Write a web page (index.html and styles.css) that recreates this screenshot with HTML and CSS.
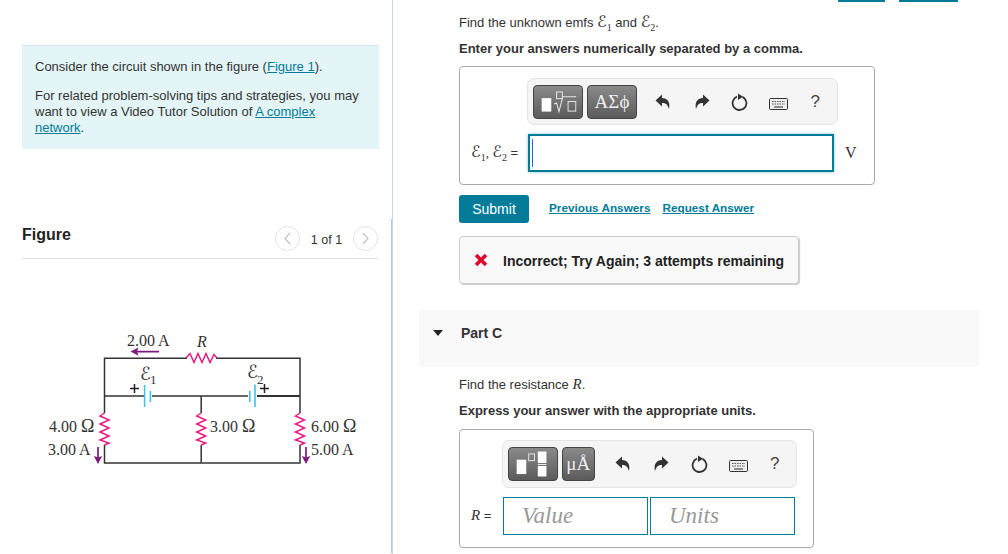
FILE: index.html
```html
<!DOCTYPE html>
<html lang="en">
<head>
  <meta charset="utf-8">
  <title>Part C</title>
  <link rel="stylesheet" href="styles.css">
</head>
<body>
<div class="page">
  <div class="left">
    <div class="info">
      <p>Consider the circuit shown in the figure (<a href="#">Figure 1</a>).</p>
      <p>For related problem-solving tips and strategies, you may want to view a Video Tutor Solution of <a href="#">A complex </a><a href="#">network</a>.</p>
    </div>
    <div class="figure-head">
      <h2>Figure</h2>
      <div class="pager">
        <span class="pager-btn"><svg width="9" height="13" viewBox="0 0 9 13"><path d="M7 1 L2 6.5 L7 12" fill="none" stroke="#c4c4c4" stroke-width="1.3"/></svg></span>
        <span class="pager-text">1 of 1</span>
        <span class="pager-btn"><svg width="9" height="13" viewBox="0 0 9 13"><path d="M2 1 L7 6.5 L2 12" fill="none" stroke="#c4c4c4" stroke-width="1.3"/></svg></span>
      </div>
    </div>
    <svg class="circuit" width="356" height="150" viewBox="22 320 356 150">
      <g fill="none" stroke="#333" stroke-width="1.5">
        <path d="M187 358.3 H104.5 V413 M104.5 445 V463 H300 V445 M300 413 V358.3 H216"/>
        <path d="M104.5 396 H144 M152 396 H248 M201.2 396 V413 M201.2 445 V463"/>
        <path d="M257 396 H300" stroke-width="2"/>
      </g>
      <g fill="none" stroke="#e8197f" stroke-width="1.5">
        <path d="M186 358 L190 353.5 L194 362.5 L198 353.5 L202 362.5 L206 353.5 L210 362.5 L214 354.5 L217 358"/>
        <path d="M104.5 413 L100 416 L109 420 L100 424 L109 428 L100 432 L109 436 L100 440 L109 443 L104.5 445"/>
        <path d="M201.2 413 L196.7 416 L205.7 420 L196.7 424 L205.7 428 L196.7 432 L205.7 436 L196.7 440 L205.7 443 L201.2 445"/>
        <path d="M300 413 L295.5 416 L304.5 420 L295.5 424 L304.5 428 L295.5 432 L304.5 436 L295.5 440 L304.5 443 L300 445"/>
      </g>
      <g stroke="#3cc4ea" stroke-width="1.6">
        <path d="M144.6 385 V407 M150.4 391 V402 M249.8 391 V402 M255 384.5 V407"/>
      </g>
      <g fill="none" stroke="#7d1a7d" stroke-width="1.7">
        <path d="M159 351.6 H134 M98 447 V459 M306 447 V459"/>
      </g>
      <g fill="#7d1a7d">
        <path d="M130.5 351.6 L138.5 347.5 L137 351.6 L138.5 355.7 Z"/>
        <path d="M98 464 L93.8 456 L98 457.5 L102.2 456 Z"/>
        <path d="M306 464 L301.8 456 L306 457.5 L310.2 456 Z"/>
      </g>
      <g class="circuit-text">
        <text x="127" y="346">2.00 A</text>
        <text x="197" y="347" font-style="italic">R</text>
        <text x="49" y="432">4.00 <tspan class="ohm">Ω</tspan></text>
        <text x="48" y="455">3.00 A</text>
        <text x="210" y="432">3.00 <tspan class="ohm">Ω</tspan></text>
        <text x="311" y="432">6.00 <tspan class="ohm">Ω</tspan></text>
        <text x="311" y="455">5.00 A</text>
        <text x="140" y="380" class="circuit-script">ℰ</text>
        <text x="150" y="384" class="circuit-sub">1</text>
        <text x="247" y="378" class="circuit-script">ℰ</text>
        <text x="257" y="384" class="circuit-sub">2</text>
      </g>
      <g stroke="#222" stroke-width="1.5">
        <path d="M130 388.5 H139 M134.5 384 V393 M260 388.5 H269 M264.5 384 V393"/>
      </g>
    </svg>
  </div>

  <div class="right">
    <div class="tabs"><span class="tab tab-a"></span><span class="tab tab-b"></span></div>

    <div class="content">
      <p class="prompt first">Find the unknown emfs <span class="math"><i class="script">ℰ</i><sub>1</sub></span> and <span class="math"><i class="script">ℰ</i><sub>2</sub></span>.</p>
      <p class="prompt strong">Enter your answers numerically separated by a comma.</p>

      <div class="answer answer-one">
        <div class="toolbar toolbar-one">
          <span class="btn btn-wide">
            <svg width="50" height="34" viewBox="0 0 50 34">
              <rect x="8" y="13" width="10" height="14" fill="#fff"/>
              <rect x="23.5" y="6.5" width="6" height="7" fill="none" stroke="#e8e8e8"/>
              <path d="M21 19 L23.5 18 L26 27 L30 11.5 H44" fill="none" stroke="#e8e8e8" stroke-width="1.1"/>
              <rect x="35.5" y="16.5" width="8" height="10" fill="none" stroke="#e8e8e8"/>
            </svg>
          </span>
          <span class="btn btn-wide btn-text">ΑΣϕ</span>
          <span class="tools">
            <span class="tool"><svg width="16" height="16" viewBox="0 0 16 16"><path class="arrow" d="M0.5 6.5 L7 0.5 V4 C12.5 4 15.5 8 14 15 C12.5 10.5 11 9 7 9 V12.5 Z"/></svg></span>
            <span class="tool"><svg width="16" height="16" viewBox="0 0 16 16"><path class="arrow" d="M15.5 6.5 L9 0.5 V4 C3.5 4 0.5 8 2 15 C3.5 10.5 5 9 9 9 V12.5 Z"/></svg></span>
            <span class="tool"><svg width="18" height="18" viewBox="0 0 18 18"><path d="M11.5 3.9 A6.9 6.9 0 1 1 6 3.7" fill="none" stroke="#333" stroke-width="1.8"/><path d="M7 0.5 L12 3.8 L7 7 Z" fill="#333"/></svg></span>
            <span class="tool tool-keys"><svg width="19" height="12" viewBox="0 0 19 12"><rect x="0.5" y="0.5" width="18" height="11" rx="1" fill="#eee" stroke="#333"/><path d="M3 3.5 H16 M3 6 H16" stroke="#555" stroke-width="1.2" stroke-dasharray="1.5 1"/><path d="M5 9 H14" stroke="#555" stroke-width="1.3"/></svg></span>
            <span class="tool tool-help">?</span>
          </span>
        </div>
        <div class="answer-row">
          <span class="label label-wide"><span class="math"><i class="script">ℰ</i><sub>1</sub>, <i class="script">ℰ</i><sub>2</sub></span> =</span>
          <div class="field-focus"><span class="caret"></span></div>
          <span class="unit">V</span>
        </div>
      </div>

      <div class="actions">
        <button class="submit">Submit</button>
        <a class="action-link" href="#">Previous Answers</a>
        <a class="action-link" href="#">Request Answer</a>
      </div>

      <div class="feedback">
        <svg width="14" height="14" viewBox="0 0 14 14"><path d="M2 2 L12 12 M12 2 L2 12" stroke="#e2062c" stroke-width="3.6"/></svg>
        <span>Incorrect; Try Again; 3 attempts remaining</span>
      </div>

      <div class="part">
        <span class="part-arrow"></span>
        <span class="part-title">Part C</span>
      </div>

      <p class="prompt">Find the resistance <i class="var">R</i>.</p>
      <p class="prompt strong">Express your answer with the appropriate units.</p>

      <div class="answer answer-two">
        <div class="toolbar toolbar-two">
          <span class="btn btn-wide">
            <svg width="50" height="34" viewBox="0 0 50 34">
              <rect x="8" y="12.5" width="10" height="15" fill="#fff"/>
              <rect x="20.5" y="6.5" width="6" height="7" fill="none" stroke="#e8e8e8"/>
              <rect x="30" y="4" width="9" height="12" fill="#fff"/>
              <rect x="30" y="17" width="9" height="1" fill="#eee"/>
              <rect x="30" y="19" width="9" height="11" fill="#fff"/>
            </svg>
          </span>
          <span class="btn btn-narrow btn-text">μÅ</span>
          <span class="tools">
            <span class="tool"><svg width="16" height="16" viewBox="0 0 16 16"><path class="arrow" d="M0.5 6.5 L7 0.5 V4 C12.5 4 15.5 8 14 15 C12.5 10.5 11 9 7 9 V12.5 Z"/></svg></span>
            <span class="tool"><svg width="16" height="16" viewBox="0 0 16 16"><path class="arrow" d="M15.5 6.5 L9 0.5 V4 C3.5 4 0.5 8 2 15 C3.5 10.5 5 9 9 9 V12.5 Z"/></svg></span>
            <span class="tool"><svg width="18" height="18" viewBox="0 0 18 18"><path d="M11.5 3.9 A6.9 6.9 0 1 1 6 3.7" fill="none" stroke="#333" stroke-width="1.8"/><path d="M7 0.5 L12 3.8 L7 7 Z" fill="#333"/></svg></span>
            <span class="tool tool-keys"><svg width="19" height="12" viewBox="0 0 19 12"><rect x="0.5" y="0.5" width="18" height="11" rx="1" fill="#eee" stroke="#333"/><path d="M3 3.5 H16 M3 6 H16" stroke="#555" stroke-width="1.2" stroke-dasharray="1.5 1"/><path d="M5 9 H14" stroke="#555" stroke-width="1.3"/></svg></span>
            <span class="tool tool-help">?</span>
          </span>
        </div>
        <div class="answer-row">
          <span class="label label-narrow"><i class="var">R</i> =</span>
          <div class="field">Value</div>
          <div class="field">Units</div>
        </div>
      </div>
    </div>
  </div>
</div>
</body>
</html>
```

FILE: styles.css
```css
body {
  margin: 0;
  font-family: "Liberation Sans", Arial, sans-serif;
  font-size: 13px;
  line-height: 16px;
  color: #333;
  background: #fff;
}
p {
  margin: 0;
}
a {
  color: #007c99;
}
.page {
  display: grid;
  grid-template-columns: 393px 1fr;
  height: 554px;
  overflow: hidden;
}

/* left column */
.left {
  position: relative;
  box-sizing: border-box;
  padding: 45px 0 0 22px;
  border-right: 1px solid #c5d6e6;
}
.left::after {
  content: "";
  position: absolute;
  top: 219px;
  bottom: 1px;
  right: 0;
  width: 1px;
  background: #b5cbdf;
}
.info {
  width: 357px;
  box-sizing: border-box;
  padding: 13px 13px 13px;
  background: #e3f5f6;
  border-top: 1px solid #d5e4e4;
}
.info p + p {
  margin-top: 13px;
}
.figure-head {
  display: flex;
  justify-content: space-between;
  align-items: center;
  width: 356px;
  box-sizing: border-box;
  margin-top: 77px;
  padding-bottom: 7px;
  border-bottom: 1px solid #ddd;
}
.figure-head h2 {
  margin: 0 0 8px;
  font-size: 16px;
  line-height: 17px;
  color: #222;
}
.pager {
  display: flex;
  align-items: center;
}
.pager-btn {
  display: flex;
  align-items: center;
  justify-content: center;
  box-sizing: border-box;
  width: 25px;
  height: 25px;
  border: 1px solid #e4e4e4;
  border-radius: 50%;
}
.pager-text {
  width: 53px;
  text-align: center;
  font-size: 12.5px;
  position: relative;
  top: 1px;
}
.circuit {
  display: block;
  margin-top: 61px;
}
.circuit-text {
  font-family: "Liberation Serif", serif;
  font-size: 16px;
  fill: #333;
}
.ohm {
  font-size: 18px;
}
.circuit-script {
  font-family: "DejaVu Sans", serif;
  font-style: italic;
  font-size: 18px;
}
.circuit-sub {
  font-size: 13px;
}

/* right column */
.tabs {
  display: flex;
  gap: 14px;
  margin-left: 445px;
  height: 2px;
}
.tab {
  background: #007c99;
}
.tab-a {
  width: 47px;
}
.tab-b {
  width: 59px;
}
.content {
  padding-left: 66px;
}
.prompt {
  margin-top: 10px;
}
.prompt.first {
  margin-top: 13px;
}
.prompt.strong {
  font-weight: bold;
}
.math {
  font-family: "Liberation Serif", serif;
  line-height: 0;
}
.script {
  font-family: "DejaVu Sans", serif;
  font-size: 16px;
  line-height: 0;
}
.math sub {
  font-size: 10px;
  line-height: 0;
}
.var {
  font-family: "Liberation Serif", serif;
  font-size: 15px;
  line-height: 0;
}
.answer {
  box-sizing: border-box;
  width: 416px;
  height: 119px;
  margin-top: 10px;
  padding-top: 11px;
  border: 1px solid #aaa;
  border-radius: 4px;
}
.answer-one {
  margin-top: 9px;
}
.answer-two {
  width: 355px;
  padding-top: 10px;
}
.toolbar {
  display: flex;
  align-items: center;
  gap: 4px;
  box-sizing: border-box;
  height: 47px;
  padding-left: 5px;
  background: #f5f5f5;
  border: 1px solid #e4e4e4;
  border-radius: 7px;
}
.toolbar-one {
  width: 311px;
  margin-left: 67px;
}
.toolbar-two {
  width: 295px;
  height: 48px;
  margin-left: 42px;
}
.btn {
  display: flex;
  align-items: center;
  justify-content: center;
  box-sizing: border-box;
  height: 34px;
  border: 1px solid #444;
  border-radius: 4px;
  background: linear-gradient(#8a8a8a, #5b5b5b);
}
.btn-wide {
  width: 50px;
}
.btn-narrow {
  width: 34px;
}
.btn-text {
  font-family: "Liberation Serif", serif;
  font-size: 19px;
  color: #eee;
}
.tools {
  display: flex;
  margin-left: 3px;
}
.toolbar-two .tools {
  margin-left: 5px;
}
.tool {
  display: flex;
  align-items: center;
  justify-content: center;
  box-sizing: border-box;
  width: 38.5px;
  height: 24px;
}
.tool-keys {
  padding-top: 4px;
}
.tool-help {
  padding-right: 4px;
  font-size: 17px;
  color: #444;
}
.arrow {
  fill: #333;
}
.answer-row {
  display: flex;
  align-items: center;
  margin-top: 9px;
  padding-left: 11px;
}
.label {
  font-size: 13px;
}
.label-wide {
  width: 57px;
  flex: none;
}
.label-narrow {
  width: 32px;
  flex: none;
}
.field-focus {
  box-sizing: border-box;
  width: 306px;
  height: 38px;
  padding: 3px 2px;
  border: 2px solid #007c99;
  box-shadow: 0 0 3px #7fc4d6;
}
.caret {
  display: block;
  width: 1px;
  height: 100%;
  background: #2a62d9;
}
.unit {
  margin-left: 11px;
  font-family: "Liberation Serif", serif;
  font-size: 16px;
}
.field {
  box-sizing: border-box;
  width: 145px;
  height: 38px;
  margin-right: 2px;
  padding-left: 18px;
  border: 1px solid #007c99;
  font-family: "Liberation Serif", serif;
  font-style: italic;
  font-size: 23px;
  line-height: 36px;
  color: #999;
}
.actions {
  display: flex;
  align-items: center;
  gap: 12px;
  margin-top: 10px;
}
.submit {
  width: 70px;
  height: 28px;
  margin-right: 8px;
  border: 0;
  border-radius: 3px;
  background: #007c99;
  color: #fff;
  font: 14px "Liberation Sans", Arial, sans-serif;
}
.action-link {
  padding-bottom: 3px;
  font-size: 11.75px;
  font-weight: bold;
}
.feedback {
  display: flex;
  align-items: center;
  gap: 15px;
  box-sizing: border-box;
  width: 340px;
  height: 48px;
  margin-top: 13px;
  padding-left: 14px;
  background: #f9f9f9;
  border: 1px solid #ccc;
  border-radius: 4px;
  box-shadow: 1px 1px 1px #ccc;
  font-weight: bold;
  font-size: 14px;
  color: #222;
}
.feedback span {
  padding-top: 2px;
}
.part {
  display: flex;
  align-items: center;
  box-sizing: border-box;
  width: 560px;
  height: 57px;
  margin: 26px 0 0 -40px;
  padding: 0 0 11px 14px;
  background: #f9f9f9;
}
.part-arrow {
  width: 0;
  height: 0;
  border-left: 5px solid transparent;
  border-right: 5px solid transparent;
  border-top: 6px solid #222;
}
.part-title {
  margin-left: 18px;
  font-size: 14px;
  font-weight: bold;
}
```
